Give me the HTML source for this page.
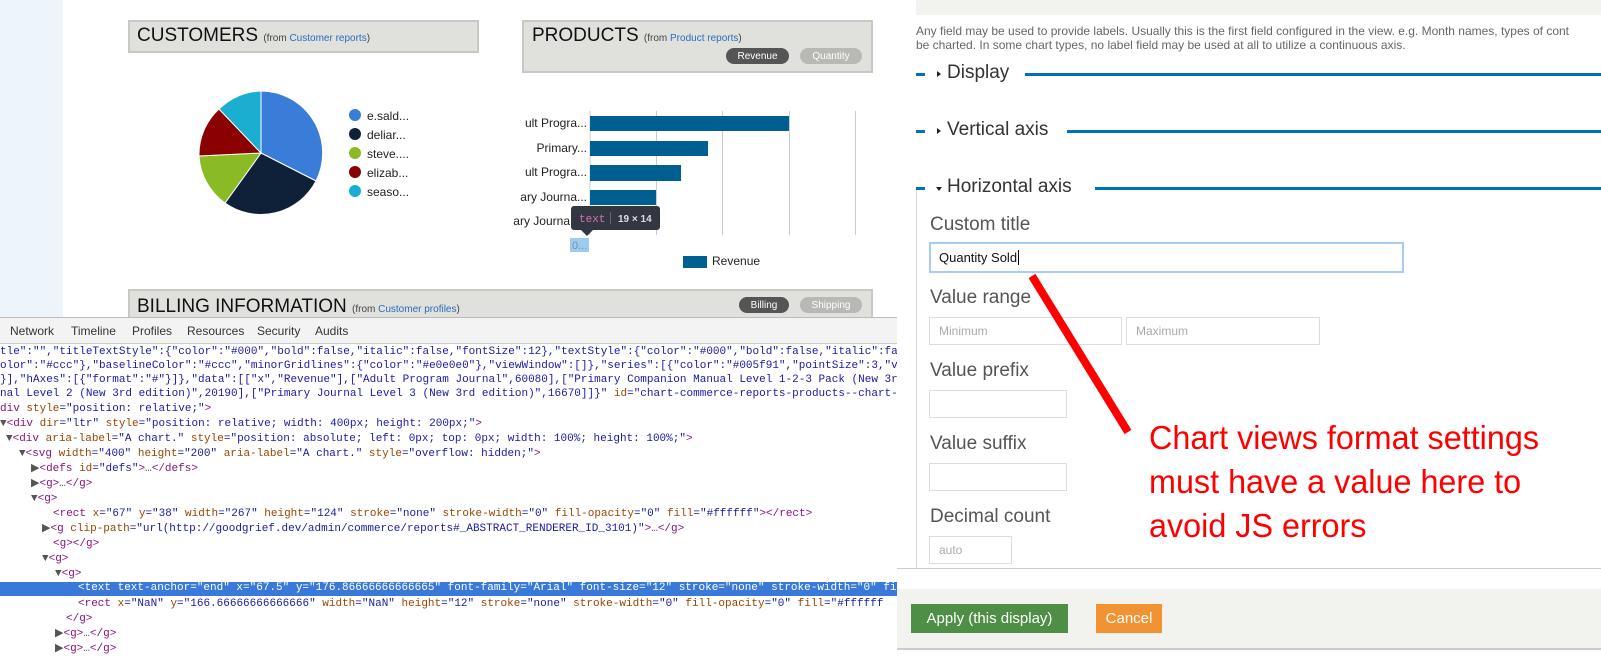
<!DOCTYPE html>
<html><head><meta charset="utf-8"><style>
*{margin:0;padding:0;box-sizing:border-box}
body{width:1601px;height:653px;position:relative;overflow:hidden;background:#fff;font-family:"Liberation Sans",sans-serif}
.a{position:absolute}
.box{position:absolute;background:#e0e0dc;border:2px solid #c8c8c4}
.h{position:absolute;font-size:19px;color:#111;white-space:nowrap}
.h small{font-size:10px;color:#444}
.h small b{font-weight:normal;color:#2a6ebb}
.pill{position:absolute;height:16px;border-radius:8px;font-size:10px;color:#fff;text-align:center;line-height:17px}
.lab{position:absolute;font-size:12px;color:#222;text-align:right;width:110px;white-space:nowrap;overflow:hidden}
.code{position:absolute;left:0;font-family:"Liberation Mono",monospace;font-size:11px;white-space:pre;color:#1a1aa6;line-height:15px;height:15px}
.t{color:#881280}.n{color:#994500}.v{color:#1a1aa6}.g{color:#555}
.fl{position:absolute;font-size:19px;color:#555;white-space:nowrap}
.in{position:absolute;border:1px solid #ddd;background:#fff;font-size:12px;color:#aaa;padding-left:9px;line-height:26px}
.sec{position:absolute;left:916px;height:24px;width:685px}
.sec .d{position:absolute;left:0;top:11px;width:9px;height:3px;background:#0071b8}
.sec .l{position:absolute;top:11px;right:0;height:3px;background:#0071b8}
.sec .tx{position:absolute;left:31px;top:0px;font-size:19px;color:#333}
</style></head><body>
<div class="a" style="left:0;top:0;width:63px;height:317px;background:#edf4fa"></div>

<div class="box" style="left:128px;top:20px;width:351px;height:33px"></div>
<div class="h" style="left:137px;top:25px">CUSTOMERS <small>(from <b>Customer reports</b>)</small></div>
<div class="box" style="left:522px;top:20px;width:351px;height:53px"></div>
<div class="h" style="left:532px;top:25px">PRODUCTS <small>(from <b>Product reports</b>)</small></div>
<div class="pill" style="left:726px;top:48px;width:63px;background:#555">Revenue</div>
<div class="pill" style="left:800px;top:48px;width:62px;background:#b8b8b4">Quantity</div>

<svg class="a" style="left:0;top:0" width="880" height="317">
<g stroke="#fff" stroke-width="1">
<path d="M261 153 L261 91 A62 62 0 0 1 316 181 Z" fill="#3a7dd8"/>
<path d="M261 153 L316 181 A62 62 0 0 1 225 203 Z" fill="#0f2039"/>
<path d="M261 153 L225 203 A62 62 0 0 1 199 156 Z" fill="#8aba24"/>
<path d="M261 153 L199 156 A62 62 0 0 1 219 109 Z" fill="#8b0000"/>
<path d="M261 153 L219 109 A62 62 0 0 1 261 91 Z" fill="#1aaed0"/>
</g>
<circle cx="355" cy="115" r="6" fill="#3a7dd8"/><circle cx="355" cy="134" r="6" fill="#0f2039"/>
<circle cx="355" cy="153" r="6" fill="#8aba24"/><circle cx="355" cy="172" r="6" fill="#8b0000"/>
<circle cx="355" cy="191" r="6" fill="#1aaed0"/>
<g stroke="#ccc" stroke-width="1"><line x1="590" y1="111" x2="590" y2="235"/><line x1="656.5" y1="111" x2="656.5" y2="235"/><line x1="722.5" y1="111" x2="722.5" y2="235"/><line x1="789.5" y1="111" x2="789.5" y2="235"/><line x1="855.5" y1="111" x2="855.5" y2="235"/></g>
<g fill="#005f91"><rect x="590" y="116" width="199" height="15"/><rect x="590" y="141" width="118" height="15"/><rect x="590" y="165" width="91" height="16"/><rect x="590" y="190" width="66" height="15"/><rect x="683" y="256" width="24" height="12"/></g>
<rect x="570" y="238" width="19" height="14" fill="#9ecbf0"/>
<text x="572" y="249" font-size="11" fill="#7a8fa8" font-family="Liberation Sans">0...</text>
<rect x="571" y="206" width="89" height="24" rx="3" fill="#333740"/>
<path d="M581 230 L587 236 L593 230Z" fill="#333740"/>
<text x="579" y="222" font-size="11" fill="#d570b8" font-family="Liberation Mono">text</text>
<line x1="610.5" y1="212" x2="610.5" y2="224" stroke="#666"/>
<text x="618" y="222" font-size="10" fill="#ddd" font-family="Liberation Sans" font-weight="bold">19 × 14</text>
</svg>
<div class="a" style="left:367px;top:107px;font-size:12px;color:#222;line-height:19px">e.sald...<br>deliar...<br>steve....<br>elizab...<br>seaso...</div>
<div class="lab" style="left:477px;top:116px">ult Progra...</div>
<div class="lab" style="left:477px;top:141px">Primary...</div>
<div class="lab" style="left:477px;top:165px">ult Progra...</div>
<div class="lab" style="left:477px;top:190px">ary Journa...</div>
<div class="lab" style="left:460px;top:214px">ary Journa</div>
<div class="a" style="left:712px;top:254px;font-size:12px;color:#222">Revenue</div>

<div class="box" style="left:128px;top:289px;width:745px;height:40px"></div>
<div class="h" style="left:137px;top:296px">BILLING INFORMATION <small>(from <b>Customer profiles</b>)</small></div>
<div class="pill" style="left:739px;top:297px;width:50px;background:#555">Billing</div>
<div class="pill" style="left:800px;top:297px;width:62px;background:#b8b8b4">Shipping</div>

<!-- devtools -->
<div class="a" style="left:0;top:317px;width:897px;height:336px;background:#fff;border-top:1px solid #bbb"></div>
<div class="a" style="left:0;top:318px;width:897px;height:26px;background:#f3f3f3;border-bottom:1px solid #ccc;font-size:12px;color:#333">
<span class="a" style="left:10px;top:6px">Network</span><span class="a" style="left:71px;top:6px">Timeline</span><span class="a" style="left:132px;top:6px">Profiles</span><span class="a" style="left:187px;top:6px">Resources</span><span class="a" style="left:257px;top:6px">Security</span><span class="a" style="left:315px;top:6px">Audits</span></div>
<div class="code" style="top:345px">tle":"","titleTextStyle":{"color":"#000","bold":false,"italic":false,"fontSize":12},"textStyle":{"color":"#000","bold":false,"italic":false</div>
<div class="code" style="top:359px">olor":"#ccc"},"baselineColor":"#ccc","minorGridlines":{"color":"#e0e0e0"},"viewWindow":[]},"series":[{"color":"#005f91","pointSize":3,"visi</div>
<div class="code" style="top:373px">}],"hAxes":[{"format":"#"}]},"data":[["x","Revenue"],["Adult Program Journal",60080],["Primary Companion Manual Level 1-2-3 Pack (New 3rd</div>
<div class="code" style="top:387px">nal Level 2 (New 3rd edition)",20190],["Primary Journal Level 3 (New 3rd edition)",16670]]}" <span class="n">id</span>="chart-commerce-reports-products--chart-r</div>
<div class="code" style="top:402px"><span class="t">div </span><span class="n">style</span>="position: relative;"<span class="t">&gt;</span></div>
<div class="code" style="top:417px"><span class="g">▼</span><span class="t">&lt;div </span><span class="n">dir</span>="ltr" <span class="n">style</span>="position: relative; width: 400px; height: 200px;"<span class="t">&gt;</span></div>
<div class="code" style="top:432px;left:6px"><span class="g">▼</span><span class="t">&lt;div </span><span class="n">aria-label</span>="A chart." <span class="n">style</span>="position: absolute; left: 0px; top: 0px; width: 100%; height: 100%;"<span class="t">&gt;</span></div>
<div class="code" style="top:447px;left:19px"><span class="g">▼</span><span class="t">&lt;svg </span><span class="n">width</span>="400" <span class="n">height</span>="200" <span class="n">aria-label</span>="A chart." <span class="n">style</span>="overflow: hidden;"<span class="t">&gt;</span></div>
<div class="code" style="top:462px;left:31px"><span class="g">▶</span><span class="t">&lt;defs </span><span class="n">id</span>="defs"<span class="t">&gt;</span><span class="g">…</span><span class="t">&lt;/defs&gt;</span></div>
<div class="code" style="top:477px;left:31px"><span class="g">▶</span><span class="t">&lt;g&gt;</span><span class="g">…</span><span class="t">&lt;/g&gt;</span></div>
<div class="code" style="top:492px;left:31px"><span class="g">▼</span><span class="t">&lt;g&gt;</span></div>
<div class="code" style="top:507px;left:53px"><span class="t">&lt;rect </span><span class="n">x</span>="67" <span class="n">y</span>="38" <span class="n">width</span>="267" <span class="n">height</span>="124" <span class="n">stroke</span>="none" <span class="n">stroke-width</span>="0" <span class="n">fill-opacity</span>="0" <span class="n">fill</span>="#ffffff"<span class="t">&gt;&lt;/rect&gt;</span></div>
<div class="code" style="top:522px;left:42px"><span class="g">▶</span><span class="t">&lt;g </span><span class="n">clip-path</span>="url(http://goodgrief.dev/admin/commerce/reports#_ABSTRACT_RENDERER_ID_3101)"<span class="t">&gt;</span><span class="g">…</span><span class="t">&lt;/g&gt;</span></div>
<div class="code" style="top:537px;left:53px"><span class="t">&lt;g&gt;&lt;/g&gt;</span></div>
<div class="code" style="top:552px;left:42px"><span class="g">▼</span><span class="t">&lt;g&gt;</span></div>
<div class="code" style="top:567px;left:55px"><span class="g">▼</span><span class="t">&lt;g&gt;</span></div>
<div class="a" style="left:0;top:582px;width:897px;height:14px;background:#3879d9"></div>
<div class="code" style="top:581px;left:78px;color:#fff">&lt;text text-anchor="end" x="67.5" y="176.86666666666665" font-family="Arial" font-size="12" stroke="none" stroke-width="0" fil</div>
<div class="code" style="top:597px;left:78px"><span class="t">&lt;rect </span><span class="n">x</span>="NaN" <span class="n">y</span>="166.66666666666666" <span class="n">width</span>="NaN" <span class="n">height</span>="12" <span class="n">stroke</span>="none" <span class="n">stroke-width</span>="0" <span class="n">fill-opacity</span>="0" <span class="n">fill</span>="#ffffff</div>
<div class="code" style="top:612px;left:66px"><span class="t">&lt;/g&gt;</span></div>
<div class="code" style="top:627px;left:55px"><span class="g">▶</span><span class="t">&lt;g&gt;</span><span class="g">…</span><span class="t">&lt;/g&gt;</span></div>
<div class="code" style="top:642px;left:55px"><span class="g">▶</span><span class="t">&lt;g&gt;</span><span class="g">…</span><span class="t">&lt;/g&gt;</span></div>

<!-- right panel -->
<div class="a" style="left:897px;top:0;width:704px;height:568px;background:#fff"></div>
<div class="a" style="left:916px;top:0;width:685px;height:15px;background:#f2f2ee"></div>
<div class="a" style="left:916px;top:24px;font-size:12px;color:#666;line-height:14px;white-space:nowrap">Any field may be used to provide labels. Usually this is the first field configured in the view. e.g. Month names, types of cont<br>be charted. In some chart types, no label field may be used at all to utilize a continuous axis.</div>
<div class="sec" style="top:62px"><div class="d"></div><div class="a" style="left:21px;top:9px;border-left:4px solid #222;border-top:3px solid transparent;border-bottom:3px solid transparent"></div><div class="tx">Display</div><div class="l" style="left:109px"></div></div>
<div class="sec" style="top:119px"><div class="d"></div><div class="a" style="left:21px;top:9px;border-left:4px solid #222;border-top:3px solid transparent;border-bottom:3px solid transparent"></div><div class="tx">Vertical axis</div><div class="l" style="left:151px"></div></div>
<div class="a" style="left:916px;top:188px;width:1px;height:380px;background:#ddd"></div>
<div class="sec" style="top:176px"><div class="d"></div><div class="a" style="left:20px;top:11px;border-top:4px solid #222;border-left:3px solid transparent;border-right:3px solid transparent"></div><div class="tx">Horizontal axis</div><div class="l" style="left:179px"></div></div>
<div class="fl" style="left:930px;top:214px">Custom title</div>
<div class="a" style="left:929px;top:242px;width:475px;height:31px;border:2px solid #a9cdf0;background:#fff;font-size:13px;color:#111;padding:6px 0 0 8px">Quantity Sold<span style="border-left:1px solid #000;margin-left:1px"></span></div>
<div class="fl" style="left:930px;top:287px">Value range</div>
<div class="in" style="left:929px;top:317px;width:193px;height:28px">Minimum</div>
<div class="in" style="left:1126px;top:317px;width:194px;height:28px">Maximum</div>
<div class="fl" style="left:930px;top:360px">Value prefix</div>
<div class="in" style="left:929px;top:390px;width:138px;height:28px"></div>
<div class="fl" style="left:930px;top:433px">Value suffix</div>
<div class="in" style="left:929px;top:463px;width:138px;height:28px"></div>
<div class="fl" style="left:930px;top:506px">Decimal count</div>
<div class="in" style="left:929px;top:536px;width:83px;height:28px">auto</div>
<div class="a" style="left:897px;top:568px;width:704px;height:1px;background:#ccc"></div>
<div class="a" style="left:897px;top:569px;width:704px;height:20px;background:#fff"></div>
<div class="a" style="left:897px;top:589px;width:704px;height:61px;background:#f2f2ee;border-bottom:2px solid #ccc"></div>
<div class="a" style="left:911px;top:604px;width:157px;height:29px;background:#4e8e46;color:#fff;font-size:15px;text-align:center;line-height:29px">Apply (this display)</div>
<div class="a" style="left:1096px;top:604px;width:66px;height:29px;background:#f29333;color:#fff;font-size:15px;text-align:center;line-height:29px">Cancel</div>

<svg class="a" style="left:0;top:0" width="1601" height="653"><line x1="1032" y1="276" x2="1128" y2="432" stroke="#f00" stroke-width="8"/></svg>
<div class="a" style="left:1149px;top:416px;font-size:33px;color:#f00;line-height:44px;white-space:nowrap;transform:scaleX(0.98);transform-origin:0 0">Chart views format settings<br>must have a value here to<br>avoid JS errors</div>
</body></html>
